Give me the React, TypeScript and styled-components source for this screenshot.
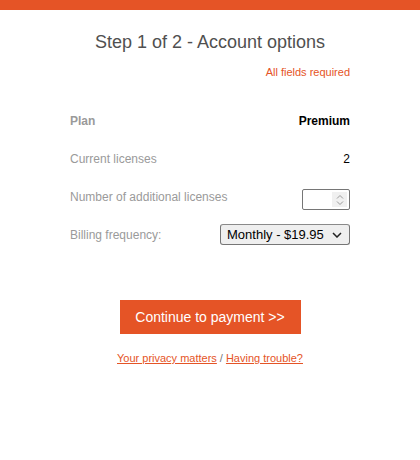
import React from "react";
import styled, { createGlobalStyle } from "styled-components";

const GlobalStyle = createGlobalStyle`
    html, body {
        margin: 0;
        padding: 0;
        background: #fff;
        font-family: "Liberation Sans", Arial, sans-serif;
    }
`;

const ORANGE = "#e55426";

const App = () => {
    return (
        <Page>
            <GlobalStyle />
            <TopBar />
            <Title>Step 1 of 2 - Account options</Title>
            <Form>
                <Required>All fields required</Required>
                <Rows>
                    <Row>
                        <Label bold>Plan</Label>
                        <Value bold>Premium</Value>
                    </Row>
                    <Row>
                        <Label>Current licenses</Label>
                        <Value>2</Value>
                    </Row>
                    <Row>
                        <Label>Number of additional licenses</Label>
                        <NumberBox>
                            <Spinner>
                                <svg width="8" height="12" viewBox="0 0 8 12">
                                    <path
                                        d="M1 4.5 L4 1.5 L7 4.5 M1 7.5 L4 10.5 L7 7.5"
                                        fill="none"
                                        stroke="#9a9a9a"
                                        strokeWidth="1"
                                    />
                                </svg>
                            </Spinner>
                        </NumberBox>
                    </Row>
                    <Row>
                        <Label>Billing frequency:</Label>
                        <SelectBox>
                            <span>Monthly - $19.95</span>
                            <svg width="10" height="6" viewBox="0 0 10 6">
                                <path
                                    d="M1 1 L5 5 L9 1"
                                    fill="none"
                                    stroke="#222"
                                    strokeWidth="1.5"
                                />
                            </svg>
                        </SelectBox>
                    </Row>
                </Rows>
                <Actions>
                    <ContinueButton>Continue to payment &gt;&gt;</ContinueButton>
                    <Links>
                        <Link href="#">Your privacy matters</Link>
                        <Sep>/</Sep>
                        <Link href="#">Having trouble?</Link>
                    </Links>
                </Actions>
            </Form>
        </Page>
    );
};

const Page = styled.div`
    width: 420px;
    height: 460px;
    background: #fff;
`;

const TopBar = styled.div`
    height: 10px;
    background-color: ${ORANGE};
`;

const Title = styled.h1`
    margin: 21px 0 0;
    font-size: 18px;
    font-weight: 400;
    line-height: 22px;
    color: #505050;
    text-align: center;
`;

const Form = styled.div`
    width: 280px;
    margin: 0 auto;
    display: flex;
    flex-direction: column;
`;

const Required = styled.div`
    margin-top: 13px;
    align-self: flex-end;
    font-size: 11px;
    line-height: 13px;
    color: ${ORANGE};
`;

const Rows = styled.div`
    margin-top: 35px;
    display: flex;
    flex-direction: column;
    gap: 16px;
`;

const Row = styled.div`
    display: flex;
    justify-content: space-between;
    align-items: flex-start;
    min-height: 22px;
    font-size: 12px;
    line-height: 14px;
`;

const Label = styled.span<{ bold?: boolean }>`
    color: #9a9a9a;
    font-weight: ${({ bold }) => (bold ? 700 : 400)};
`;

const Value = styled.span<{ bold?: boolean }>`
    color: #000;
    font-weight: ${({ bold }) => (bold ? 700 : 400)};
`;

const NumberBox = styled.div`
    margin-top: -1px;
    width: 48px;
    height: 21px;
    box-sizing: border-box;
    border: 1px solid #767676;
    border-radius: 2px;
    display: flex;
    justify-content: flex-end;
    align-items: center;
    padding: 2px;
`;

const Spinner = styled.div`
    width: 15px;
    height: 15px;
    background: #f0f0f0;
    display: flex;
    align-items: center;
    justify-content: center;
`;

const SelectBox = styled.div`
    margin-top: -4px;
    width: 130px;
    height: 21px;
    box-sizing: border-box;
    border: 1px solid #767676;
    border-top-color: #8a8a8a;
    border-radius: 3px;
    background: #efefef;
    display: flex;
    align-items: center;
    justify-content: space-between;
    padding: 0 7px 0 6px;
    font-family: "Liberation Sans", Tahoma, sans-serif;
    font-size: 13px;
    color: #000;
`;

const Actions = styled.div`
    margin-top: 50px;
    display: flex;
    flex-direction: column;
    align-items: center;
`;

const ContinueButton = styled.button`
    width: 181px;
    height: 34px;
    border: none;
    background-color: ${ORANGE};
    color: #fff;
    font-family: "Liberation Sans", Tahoma, sans-serif;
    font-size: 14px;
    padding: 0;
`;

const Links = styled.div`
    margin-top: 18px;
    font-size: 11px;
    line-height: 13px;
`;

const Link = styled.a`
    color: ${ORANGE};
    text-decoration: underline;
`;

const Sep = styled.span`
    color: #777;
    margin: 0 3px;
`;

export default App;
